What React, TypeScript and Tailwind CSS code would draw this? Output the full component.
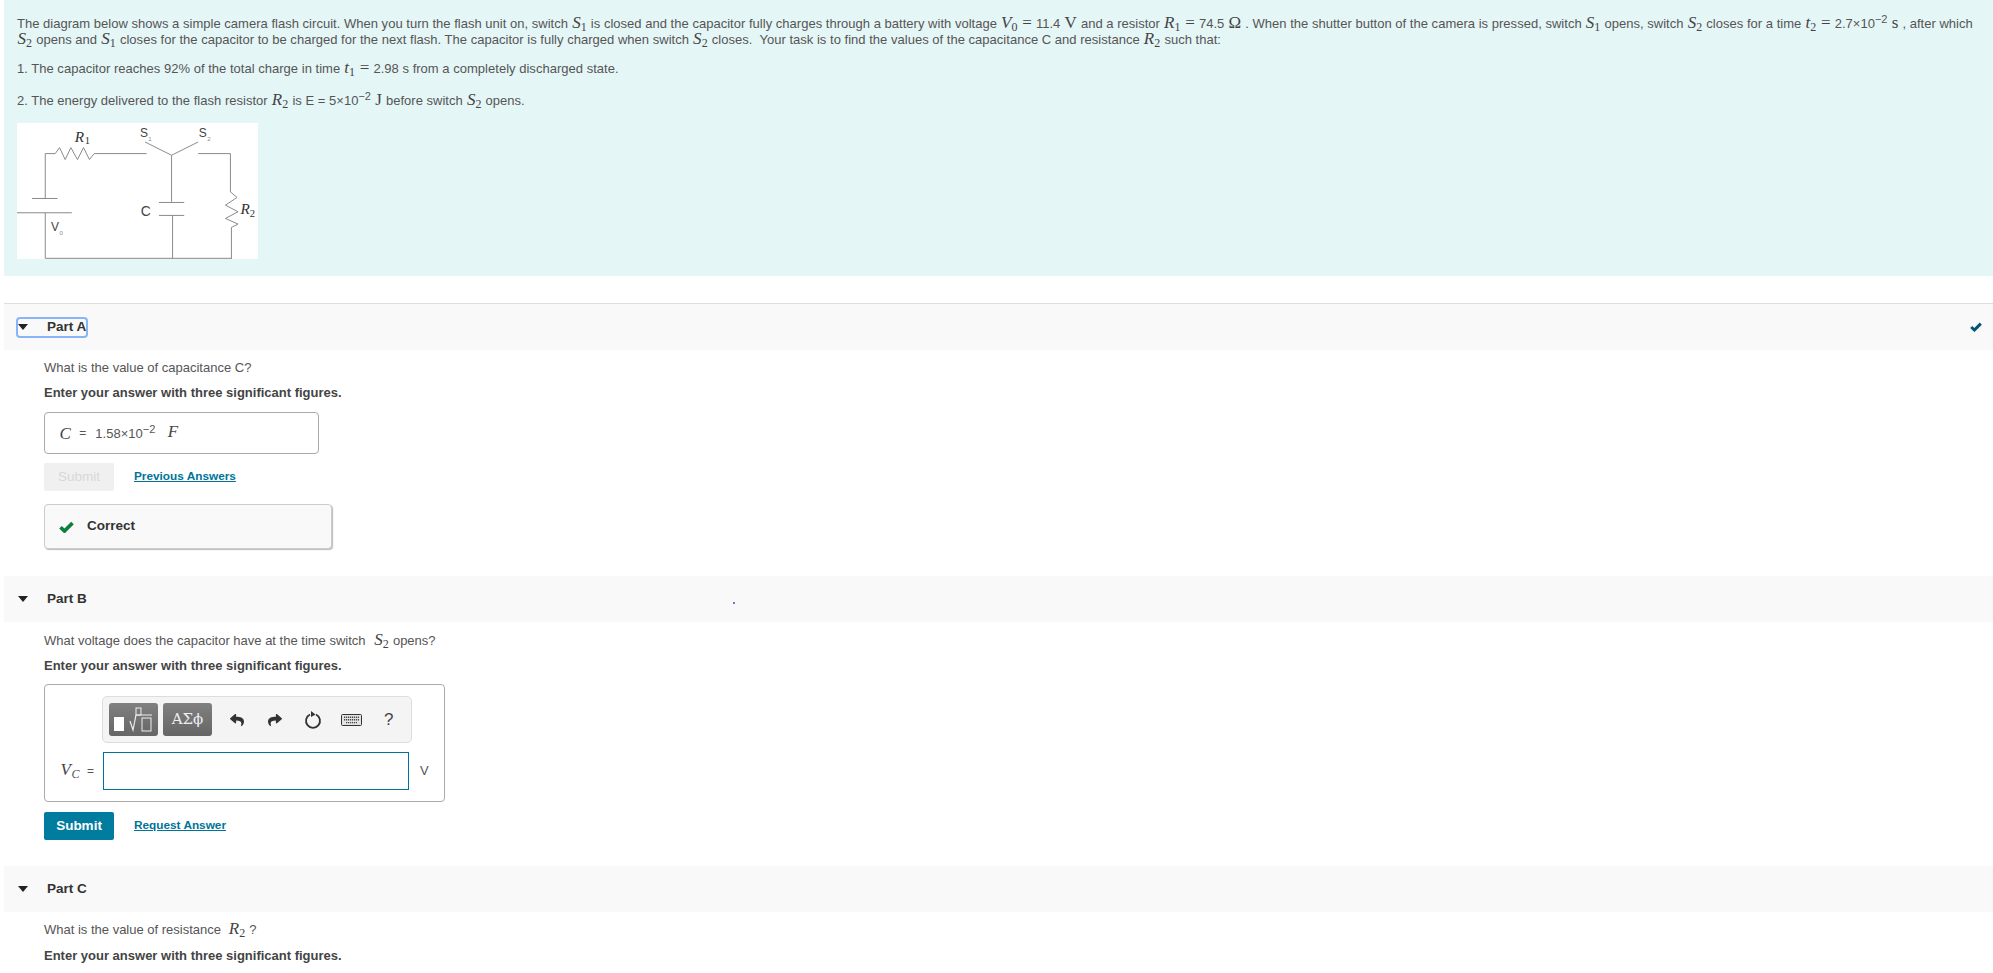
import React from "react";
import { FaReply, FaShare } from "react-icons/fa";

const M = ({ v, s, up }: { v: string; s?: string; up?: boolean }) => (
  <span className={`px-[0.5px] font-['Liberation_Serif',serif] text-[17px] leading-none text-[#444] ${up ? "" : "italic"}`}>
    {v}
    {s && <sub className="not-italic text-[12px]">{s}</sub>}
  </span>
);

const Arrow = () => (
  <svg width="10" height="6" viewBox="0 0 10 6" className="shrink-0">
    <path d="M0 0H10L5 6Z" fill="#222" />
  </svg>
);

const Check = ({ color, w }: { color: string; w: number }) => (
  <svg width={w} height={w * 0.8} viewBox="0 0 12 9.6" className="shrink-0">
    <path d="M1.2 5L4.4 8L10.8 1.6" fill="none" stroke={color} strokeWidth="3" />
  </svg>
);

const PartHeader = ({ label, focused, done, dot }: { label: string; focused?: boolean; done?: boolean; dot?: boolean }) => (
  <div className={`relative flex items-center justify-between bg-[#f9f9f9] pl-[14px] pr-[11px] ${focused ? "h-[47px] border-t border-[#dddddd]" : "h-[46px]"}`}>
    <div className={`inline-flex h-[17px] items-center gap-[19px] ${focused ? "rounded-[2px] outline-2 outline-[#8ab4f8]" : ""}`}>
      <Arrow />
      <span className="text-[13.5px] font-bold leading-none text-[#333]">{label}</span>
    </div>
    {done && <Check color="#00566f" w={12} />}
    {dot && <span className="absolute left-[729px] top-[26px] h-[2px] w-[2px] rounded-full bg-[#3050c0]" />}
  </div>
);

const Enter = ({ cls }: { cls: string }) => (
  <p className={`h-4 text-[13px] font-bold leading-4 text-[#444] ${cls}`}>Enter your answer with three significant figures.</p>
);

const Circuit = () => (
  <svg width="241" height="136" viewBox="50 38 725 409" className="block bg-white font-['Liberation_Sans',sans-serif]">
    <g fill="none" stroke="#8a8a8a" strokeWidth="3">
      <path d="M135 265V130H165L178 112L195 148L212 112L232 148L250 112L268 148L282 130H440" />
      <path d="M50 308H215M95 265H172M135 308V445H697M435 95L515 135L595 95M515 135V275M477 277H553M477 316H553M518 316V445" />
      <path d="M595 130H692V245L712 262L677 285L715 305L677 325L715 342L695 352V445" />
    </g>
    <text x="224" y="94" fontSize="46" fontStyle="italic" fontFamily="Liberation Serif" fill="#333">R</text>
    <text x="254" y="102" fontSize="32" fontFamily="Liberation Serif" fill="#333">1</text>
    <text x="420" y="80" fontSize="36" fill="#444">S</text>
    <text x="445" y="93" fontSize="18" fill="#888">1</text>
    <text x="597" y="80" fontSize="36" fill="#444">S</text>
    <text x="622" y="93" fontSize="18" fill="#888">2</text>
    <text x="422" y="317" fontSize="42" fill="#444">C</text>
    <text x="152" y="364" fontSize="36" fill="#444">V</text>
    <text x="178" y="375" fontSize="18" fill="#888">0</text>
    <text x="722" y="313" fontSize="46" fontStyle="italic" fontFamily="Liberation Serif" fill="#333">R</text>
    <text x="750" y="320" fontSize="32" fontFamily="Liberation Serif" fill="#333">2</text>
  </svg>
);

const ToolBtn = ({ children }: { children: React.ReactNode }) => (
  <div className="flex h-[33px] w-[49px] items-center justify-center rounded-[3px] bg-gradient-to-b from-[#808080] to-[#666666]">{children}</div>
);

const Toolbar = () => (
  <div className="flex h-[47px] w-[310px] items-center rounded-[5px] border border-[#dddddd] bg-[#f4f4f4] pl-[6px]">
    <ToolBtn>
      <svg width="42" height="26" viewBox="0 0 42 26">
        <rect x="1" y="10" width="10" height="14" fill="#fff" />
        <rect x="23" y="1" width="5" height="7" fill="none" stroke="#eee" strokeWidth="1" />
        <path d="M17 14l3 9 3-15h16" fill="none" stroke="#eee" strokeWidth="1.2" />
        <rect x="29" y="11" width="9" height="13" fill="none" stroke="#eee" strokeWidth="1" />
      </svg>
    </ToolBtn>
    <div className="ml-[5px]">
      <ToolBtn>
        <span className="font-['DejaVu_Serif','Liberation_Serif',serif] text-[15px] leading-none text-[#eeeeee]">ΑΣϕ</span>
      </ToolBtn>
    </div>
    <FaReply className="ml-[18px] text-[14px] text-[#333]" />
    <FaShare className="ml-[24px] text-[14px] text-[#333]" />
    <svg width="18" height="20" viewBox="0 0 18 20" className="ml-[22px]">
      <path d="M6 4.5a7 7 0 1 0 6 0" fill="none" stroke="#333" strokeWidth="1.8" />
      <path d="M7 1l4.5 3.5L7 7Z" fill="#333" />
    </svg>
    <svg width="21" height="12" viewBox="0 0 21 12" className="ml-[19px]">
      <rect x="0.5" y="0.5" width="20" height="11" rx="1" fill="#e4e4e4" stroke="#333" />
      <path d="M3 3.2h15M3 5.8h15M5 8.6h11" stroke="#444" strokeWidth="1.4" strokeDasharray="1.2 .8" />
    </svg>
    <span className="ml-[22px] text-[17px] leading-none text-[#444]">?</span>
  </div>
);

const Link = ({ children }: { children: React.ReactNode }) => (
  <a className="ml-5 text-[11.8px] font-bold text-[#007398] underline">{children}</a>
);

export default function App() {
  return (
    <div className="h-[973px] overflow-hidden bg-white pl-[4px] font-['Liberation_Sans',Arial,sans-serif] text-[13px] text-[#555]">
      <section className="h-[276px] bg-[#e5f6f7] pl-[13px] pt-[14px] tracking-[0.02px]">
        <p className="h-4 whitespace-nowrap leading-4">
          The diagram below shows a simple camera flash circuit. When you turn the flash unit on, switch <M v="S" s="1" /> is closed and the capacitor fully charges through a battery with voltage <M v="V" s="0" /> <M v="=" up /> 11.4 <M v="V" up /> and a resistor <M v="R" s="1" /> <M v="=" up /> 74.5 <M v="Ω" up /> . When the shutter button of the camera is pressed, switch <M v="S" s="1" /> opens, switch <M v="S" s="2" /> closes for a time <M v="t" s="2" /> <M v="=" up /> 2.7×10<sup className="text-[11px]">−2</sup> <M v="s" up /> , after which
        </p>
        <p className="h-4 whitespace-nowrap leading-4">
          <M v="S" s="2" /> opens and <M v="S" s="1" /> closes for the capacitor to be charged for the next flash. The capacitor is fully charged when switch <M v="S" s="2" /> closes.&nbsp; Your task is to find the values of the capacitance C and resistance <M v="R" s="2" /> such that:
        </p>
        <p className="mt-[13px] h-4 whitespace-nowrap leading-4">
          1. The capacitor reaches 92% of the total charge in time <M v="t" s="1" /> <M v="=" up /> 2.98 s from a completely discharged state.
        </p>
        <p className="mt-4 h-4 whitespace-nowrap leading-4">
          2. The energy delivered to the flash resistor <M v="R" s="2" /> is E = 5×10<sup className="text-[11px]">−2</sup> <M v="J" up /> before switch <M v="S" s="2" /> opens.
        </p>
        <div className="mt-4">
          <Circuit />
        </div>
      </section>

      <div className="mt-[27px]">
        <PartHeader label="Part A" focused done />
      </div>
      <div className="pl-[40px]">
        <p className="mt-[10px] h-4 leading-4">What is the value of capacitance C?</p>
        <Enter cls="mt-[9px]" />
        <div className="mt-[11px] flex h-[42px] w-[275px] items-center rounded-[4px] border border-[#aaaaaa] pl-[14px]">
          <M v="C" />
          <span className="ml-2 text-[12px]">=</span>
          <span className="ml-[9px] mt-[2px] text-[13px]">1.58×10<sup className="text-[11px]">−2</sup></span>
          <span className="ml-3"><M v="F" /></span>
        </div>
        <div className="mt-[9px] flex h-[28px] items-center">
          <div className="flex h-full w-[70px] items-center justify-center rounded-[2px] bg-[#f0f0f0] text-[13.5px] text-[#d8d8d8]">Submit</div>
          <Link>Previous Answers</Link>
        </div>
        <div className="mt-[13px] flex h-[45px] w-[288px] items-center rounded-[4px] border border-[#cccccc] bg-[#f9f9f9] pl-[14px] shadow-[1px_1px_1px_#bbbbbb]">
          <Check color="#0a8040" w={15} />
          <span className="ml-[13px] text-[13.5px] font-bold text-[#333]">Correct</span>
        </div>
      </div>

      <div className="mt-[27px]">
        <PartHeader label="Part B" dot />
      </div>
      <div className="pl-[40px]">
        <p className="mt-[9px] h-4 leading-4">What voltage does the capacitor have at the time switch &nbsp;<span className="ml-[1px]"><M v="S" s="2" /></span> opens?</p>
        <Enter cls="mt-[11px]" />
        <div className="mt-[10px] h-[118px] w-[401px] rounded-[4px] border border-[#aaaaaa] pt-[11px]">
          <div className="ml-[57px]">
            <Toolbar />
          </div>
          <div className="mt-[9px] flex items-center">
            <span className="ml-[15px] w-[27px]"><M v="V" /><sub className="font-['Liberation_Serif',serif] text-[12px] italic">C</sub></span>
            <span className="text-[12px]">=</span>
            <div className="ml-[9px] h-[38px] w-[306px] border border-[#007398] bg-white" />
            <span className="ml-[11px] text-[13px]">V</span>
          </div>
        </div>
        <div className="mt-[10px] flex h-[28px] items-center">
          <div className="flex h-full w-[70px] items-center justify-center rounded-[2px] bg-[#007c9f] text-[13.5px] font-bold text-white">Submit</div>
          <Link>Request Answer</Link>
        </div>
      </div>

      <div className="mt-[26px]">
        <PartHeader label="Part C" />
      </div>
      <div className="pl-[40px]">
        <p className="mt-[8px] h-4 leading-4">What is the value of resistance &nbsp;<M v="R" s="2" /> ?</p>
        <Enter cls="mt-[12px]" />
      </div>
    </div>
  );
}
